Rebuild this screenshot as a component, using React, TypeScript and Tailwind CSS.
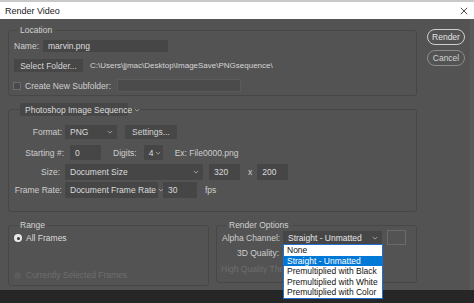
import React from 'react'

const font = { fontFamily: '"Liberation Sans", Arial, sans-serif' }

function Chevron({ className = '' }: { className?: string }) {
  return (
    <svg viewBox="0 0 8 5" className={`w-[6px] h-[4px] ${className}`} fill="none" stroke="#a8a8a8" strokeWidth="1.2">
      <path d="M1 1l3 3 3-3" />
    </svg>
  )
}

function Drop({ label, className = '' }: { label: string; className?: string }) {
  return (
    <div className={`flex items-center justify-between bg-[#464646] pl-[5px] pr-[4px] text-[#dcdcdc] ${className}`}>
      <span>{label}</span>
      <Chevron className="ml-[2px] shrink-0" />
    </div>
  )
}

function Field({ value, className = '' }: { value?: string; className?: string }) {
  return <div className={`flex items-center bg-[#464646] pl-[5px] text-[#dcdcdc] ${className}`}>{value}</div>
}

export default function App() {
  return (
    <div className="w-[474px] h-[303px] overflow-hidden whitespace-nowrap flex flex-col bg-[#262626] text-[8.5px] leading-[12px] text-[#cfcfcf]" style={font}>
      {/* title bar */}
      <div className="h-[19px] shrink-0 flex items-center justify-between border-t-2 border-[#c9c9c9] bg-white pl-[5px] pr-[6px] text-[9px] text-[#1a1a1a]">
        <span>Render Video</span>
        <svg viewBox="0 0 10 10" className="w-[8px] h-[8px]" stroke="#333" strokeWidth="1.1">
          <path d="M1 1l8 8M9 1l-8 8" />
        </svg>
      </div>

      <div className="h-[271px] shrink-0 flex bg-[#535353] border-r-[4px] border-[#5a5a5a]">
        <div className="w-[417px] shrink-0 pl-[8px] pt-[5px] flex flex-col">
          {/* Location */}
          <fieldset className="border border-[#474747] rounded-[3px] px-[5px] pt-[4px] pb-[3px] flex flex-col gap-[7px]">
            <legend className="ml-[3px] px-[3px] text-[#d2d2d2]">Location</legend>
            <div className="flex items-center h-[12px]">
              <span className="w-[29px]">Name:</span>
              <Field value="marvin.png" className="w-[125px] h-[12px]" />
            </div>
            <div className="flex items-center h-[13px]">
              <div className="w-[69px] h-[13px] flex items-center justify-center bg-[#474747] text-[#d6d6d6]">Select Folder...</div>
              <span className="ml-[7px] text-[8px] text-[#d6d6d6]">C:\Users\jjmac\Desktop\ImageSave\PNGsequence\</span>
            </div>
            <div className="flex items-center h-[13px]">
              <div className="w-[8px] h-[8px] -ml-[1px] border border-[#6a6a6a] bg-[#4a4a4a]" />
              <span className="ml-[4px] w-[92px]">Create New Subfolder:</span>
              <div className="w-[124px] h-[13px] bg-[#4b4b4b] border border-[#5a5a5a]" />
            </div>
          </fieldset>

          {/* Sequence */}
          <fieldset className="mt-[7px] border border-[#474747] rounded-[3px] px-[5px] pt-[9px] pb-[13px] flex flex-col">
            <legend className="ml-[6px]">
              <Drop label="Photoshop Image Sequence" className="w-[108px] h-[13px] bg-[#474747]" />
            </legend>
            <div className="flex items-center h-[14px]">
              <span className="w-[48px] text-right">Format:</span>
              <Drop label="PNG" className="ml-[3px] w-[52px] h-[14px]" />
              <div className="ml-[8px] w-[52px] h-[14px] flex items-center justify-center bg-[#474747] text-[#d6d6d6]">Settings...</div>
            </div>
            <div className="mt-[6px] flex items-center h-[15px]">
              <span className="w-[50px] text-right">Starting #:</span>
              <Field value="0" className="ml-[6px] w-[31px] h-[15px]" />
              <span className="ml-[12px]">Digits:</span>
              <Drop label="4" className="ml-[7px] w-[19px] h-[15px] pl-[3px] pr-[2px]" />
              <span className="ml-[12px]">Ex: File0000.png</span>
            </div>
            <div className="mt-[3px] flex items-center h-[17px]">
              <span className="w-[46px] text-right">Size:</span>
              <Drop label="Document Size" className="ml-[5px] w-[138px] h-[16px]" />
              <Field value="320" className="ml-[6px] w-[31px] h-[16px]" />
              <span className="ml-[8px]">x</span>
              <Field value="200" className="ml-[5px] w-[31px] h-[16px]" />
            </div>
            <div className="mt-[2px] flex items-center h-[16px]">
              <span className="w-[48px] text-right">Frame Rate:</span>
              <Drop label="Document Frame Rate" className="ml-[3px] w-[93px] h-[16px] pr-[3px]" />
              <Field value="30" className="ml-[5px] w-[34px] h-[16px]" />
              <span className="ml-[8px]">fps</span>
            </div>
          </fieldset>

          <div className="mt-[7px] flex gap-[7px]">
            {/* Range */}
            <fieldset className="w-[201px] h-[67px] border border-[#474747] rounded-[3px] px-[5px] pt-[1px] flex flex-col">
              <legend className="ml-[4px] px-[2px] text-[#d2d2d2]">Range</legend>
              <div className="flex items-center">
                <div className="w-[8px] h-[8px] rounded-full bg-[#e8e8e8] flex items-center justify-center">
                  <div className="w-[3px] h-[3px] rounded-full bg-[#333]" />
                </div>
                <span className="ml-[4px] text-[#dcdcdc]">All Frames</span>
              </div>
              <div className="mt-[25px] flex items-center text-[#6e6e6e]">
                <div className="w-[7px] h-[7px] rounded-full bg-[#5c5c5c]" />
                <span className="ml-[5px]">Currently Selected Frames</span>
              </div>
            </fieldset>

            {/* Render Options */}
            <fieldset className="w-[201px] h-[64px] border border-[#474747] rounded-[3px] px-[5px] flex flex-col">
              <legend className="ml-[4px] px-[3px] text-[#d2d2d2]">Render Options</legend>
              <div className="flex items-center h-[13px]">
                <span className="w-[57px] text-right">Alpha Channel:</span>
                <div className="relative ml-[4px]">
                  <Drop label="Straight - Unmatted" className="w-[99px] h-[13px] bg-[#2f2f2f] text-[#e6e6e6]" />
                  <div className="absolute left-0 top-full w-[100px] border border-[#1e6fd0] bg-white text-[#111] leading-[10.5px] z-10">
                    <div className="px-[3px]">None</div>
                    <div className="px-[3px] bg-[#0078d7] text-white">Straight - Unmatted</div>
                    <div className="px-[3px]">Premultiplied with Black</div>
                    <div className="px-[3px]">Premultiplied with White</div>
                    <div className="px-[3px]">Premultiplied with Color</div>
                  </div>
                </div>
                <div className="ml-[5px] w-[19px] h-[15px] border border-[#6a6a6a]" />
              </div>
              <div className="mt-[3px] flex items-center">
                <span className="w-[57px] text-right">3D Quality:</span>
              </div>
              <div className="mt-[4px] -ml-[1px] text-[#6e6e6e]">High Quality Threshold:</div>
            </fieldset>
          </div>
        </div>

        {/* buttons */}
        <div className="ml-[10px] pt-[10px] flex flex-col gap-[5px]">
          <div className="w-[38px] h-[16px] rounded-full border border-[#cfcfcf] flex items-center justify-center text-[#e2e2e2]">Render</div>
          <div className="w-[38px] h-[16px] rounded-full border border-[#8c8c8c] flex items-center justify-center text-[#d2d2d2]">Cancel</div>
        </div>
      </div>
    </div>
  )
}
